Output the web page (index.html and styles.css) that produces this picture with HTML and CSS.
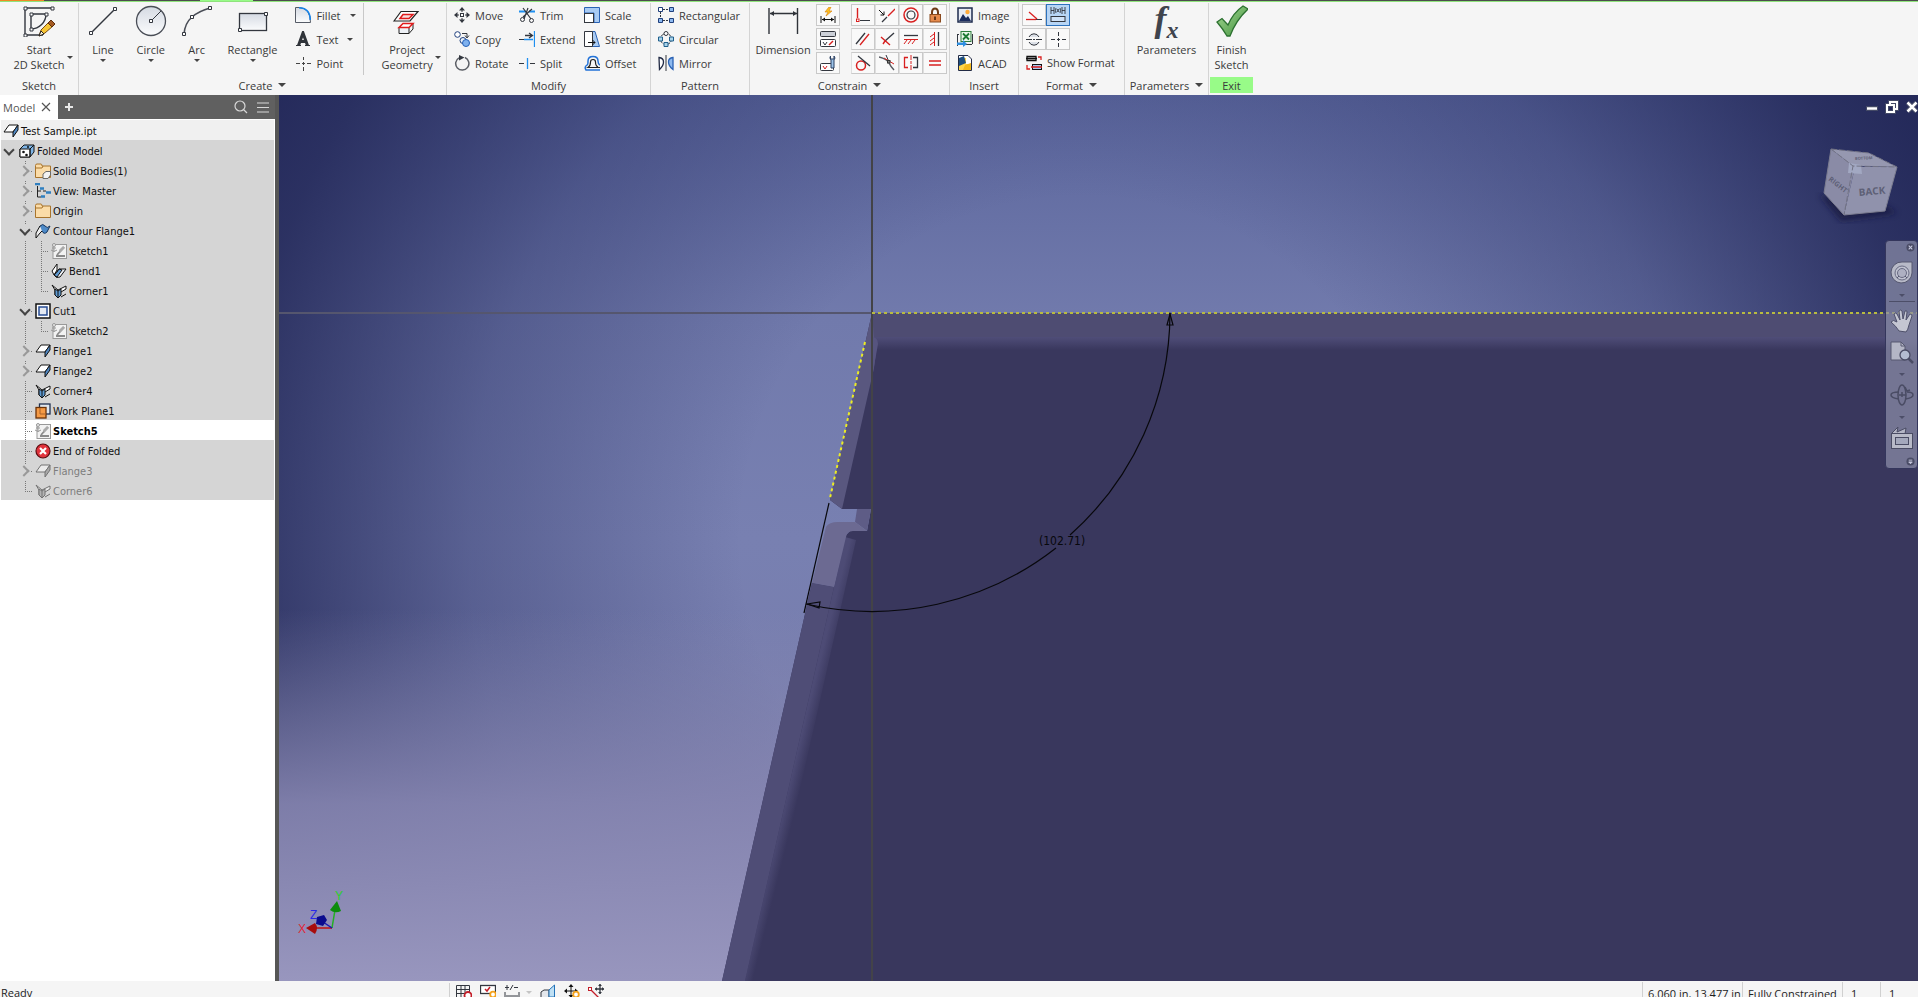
FILE: index.html
```html
<!DOCTYPE html>
<html lang="en">
<head>
    <meta charset="utf-8">
    <title>Test Sample.ipt</title>
    <link rel="stylesheet" href="styles.css">
</head>
<body>
    <!-- shared icons -->
    <svg class="defs" aria-hidden="true">
        <linearGradient id="steel" x1="0" y1="0" x2="0" y2="1"><stop offset="0" stop-color="#d5dae3"/><stop offset="1" stop-color="#fbfcfd"/></linearGradient>
        <linearGradient id="leaf" x1="0" y1="0" x2="1" y2="1"><stop offset="0" stop-color="#a9dc96"/><stop offset="1" stop-color="#3f8f3c"/></linearGradient>
        <symbol id="flange" viewBox="0 0 16 16">
            <path d="M1 9L6 2H15L10 9Z" fill="#fff" stroke="#111"/>
            <path d="M10 9L15 2V7L10 14Z" fill="#4f86c0" stroke="#111"/>
        </symbol>
        <symbol id="corner" viewBox="0 0 16 16">
            <path d="M1 2L7 7V14L4 12V7Z" fill="#fff" stroke="#111"/>
            <path d="M7 7L15 3V6L10 9M10 14L15 11" stroke="#111" fill="#fff"/>
            <path d="M4 6L7 8L10 6V12L7 15L4 12Z" fill="#5f9bd3" stroke="#111"/>
            <path d="M7 8V14" stroke="#111"/>
        </symbol>
        <symbol id="sketch" viewBox="0 0 16 16">
            <rect x="2" y="1.500" width="13.500" height="14" fill="#f2f2f2" stroke="#999"/>
            <path d="M5 13H14M6 12L13 4" stroke="#8a8a8a" stroke-width="1.800" fill="none"/>
            <path d="M8 7L12 3L14 5L9 10Z" fill="#aaa"/>
            <circle cx="3" cy="2" r="1.500" fill="#eee" stroke="#999"/>
            <path d="M3 4V9M1 5H5M0 7Q3 10 6 7" stroke="#999" fill="none"/>
        </symbol>
        <symbol id="folder" viewBox="0 0 16 16">
            <path d="M.5 14.5V2.5Q.5 1 2 1H6Q7 1 7 3H15.500V14.500Z" fill="#fbdca8" stroke="#a8742c"/>
            <path d="M1 5H7L8 3" stroke="#a8742c" fill="none"/>
        </symbol>
    </svg>

    <header class="ribbon">
        <div class="strip"><span class="file-tab"></span><span class="sketch-tab"></span></div>
        <div class="panels">
            <section class="panel sketch-panel">
                <div class="tools">
                    <button class="big has-side">
                        <svg viewBox="0 0 32 32"><g fill="none" stroke="#33373f" stroke-width="1.4"><path d="M29 3H2V30H20M8 24V9H23A15 15 0 0 1 8 24"/><g fill="#fff" stroke-width="1"><path d="M1 2h3v3h-3zM28 2h3v3h-3zM1 29h3v3h-3zM7 8h3v3h-3zM22 8h3v3h-3zM7 23h3v3h-3z"/></g></g><path d="M16 31L18 25L26 17L30 21L22 28Z" fill="#f7c634" stroke="#7a4a12"/><path d="M25 18L28 15L32 19L29 22Z" fill="#a45a22" stroke="#5c2d0c"/><path d="M16 31L18 26L21 29Z" fill="#fff3d8" stroke="#222"/></svg>
                        <span>Start<br>2D Sketch</span><i class="arrow side"></i>
                    </button>
                </div>
                <h2>Sketch</h2>
            </section>

            <section class="panel create-panel">
                <div class="tools">
                    <button class="big"><svg viewBox="0 0 32 32"><path d="M4 28L28 4" stroke="#33373f" stroke-width="1.4"/><path d="M2.500 26.500h3v3h-3zM26.500 2.500h3v3h-3z" fill="#fff" stroke="#33373f"/></svg><span>Line</span><i class="arrow"></i></button>
                    <button class="big"><svg viewBox="0 0 32 32"><circle cx="16" cy="16" r="14.500" fill="url(#steel)" stroke="#4a4e57" stroke-width="1.300"/><path d="M16 16L26 6" stroke="#33373f"/><path d="M14.500 14.500h3v3h-3z" fill="#fff" stroke="#33373f"/></svg><span>Circle</span><i class="arrow"></i></button>
                    <button class="big narrow"><svg viewBox="0 0 32 32"><path d="M3 29Q4 18 11 12T29 3" stroke="#4a4e57" stroke-width="1.600" fill="none"/><path d="M1.500 27.500h3v3h-3zM9.500 10.500h3v3h-3zM27.500 1.500h3v3h-3z" fill="#fff" stroke="#33373f"/></svg><span>Arc</span><i class="arrow"></i></button>
                    <button class="big wide"><svg viewBox="0 0 32 32"><rect x="2.500" y="8.500" width="27" height="17" fill="url(#steel)" stroke="#33373f" stroke-width="1.300"/><path d="M1.500 23.500h3v3h-3zM27.500 7.500h3v3h-3z" fill="#fff" stroke="#33373f"/></svg><span>Rectangle</span><i class="arrow"></i></button>
                    <div class="stack create-stack">
                        <button class="small"><svg viewBox="0 0 16 16"><path d="M.5 .5H4Q15.500 1 15.500 15.500H.5Z" fill="url(#steel)" stroke="#555b66"/><path d="M4 .8Q15 1 15.300 13" stroke="#1682e8" stroke-width="1.600" fill="none"/></svg>Fillet<i class="arrow"></i></button>
                        <button class="small"><svg viewBox="0 0 16 16"><path d="M3.500 14.500L8 2L12.500 14.500M5 10.500H11" stroke="#2f3339" stroke-width="3" fill="none"/><path d="M1 14.500H6M10 14.500H15" stroke="#2f3339"/></svg>Text<i class="arrow"></i></button>
                        <button class="small"><svg viewBox="0 0 16 16"><path d="M1 8.500H5M7 8.500H10M12 8.500H16M8.500 2V5M8.500 7V10M8.500 12V16" stroke="#444"/></svg>Point</button>
                    </div>
                    <button class="big project has-side"><svg viewBox="0 0 32 32"><path d="M3 16L10 6.500H27L19 16Z" fill="#fff" stroke="#222" stroke-width="1.200"/><path d="M9 13.500L12 9.500H22L18 13.500Z" fill="#f7dede" stroke="#e01b1b" stroke-width="1.500"/><path d="M8 22.500H18V28.500H8Z" fill="#eef1f6" stroke="#222"/><path d="M18 28.500L22 24V18.500" fill="none" stroke="#222"/><path d="M8 22.500L12 18.500H22L18 22.500Z" fill="#fff" stroke="#e01b1b" stroke-width="1.500"/></svg><span>Project<br>Geometry</span><i class="arrow side"></i></button>
                </div>
                <h2>Create<i class="arrow"></i></h2>
            </section>

            <section class="panel modify-panel">
                <div class="tools inset">
                    <div class="stack">
                        <button class="small"><svg viewBox="0 0 16 16"><path d="M8 0L11 3.500H5ZM8 16L5 12.500H11ZM0 8L3.500 5V11ZM16 8L12.500 11V5Z" fill="#33373f"/><path d="M8 2V5M8 11V14M2 8H5M11 8H14" stroke="#33373f"/><rect x="6.500" y="6.500" width="3" height="3" fill="#fff" stroke="#33373f"/></svg>Move</button>
                        <button class="small"><svg viewBox="0 0 16 16"><circle cx="3.500" cy="3.500" r="2.800" fill="#fff" stroke="#1f3f7c"/><circle cx="9" cy="9.500" r="3" fill="#e8f1fb" stroke="#1f3f7c"/><circle cx="12" cy="12" r="3.500" fill="#7fb1ee" stroke="#2560b8"/><path d="M8 2.500H13V6M11 4.500L13 7L15 4.500" stroke="#33373f" fill="none"/></svg>Copy</button>
                        <button class="small"><svg viewBox="0 0 16 16"><path d="M11 2.500A6.600 6.600 0 1 1 5 2.800" stroke="#5c5f66" stroke-width="1.500" fill="none"/><path d="M5 0L10.500 2.500L5 5.500Z" fill="#33373f"/></svg>Rotate</button>
                    </div>
                    <div class="stack">
                        <button class="small"><svg viewBox="0 0 16 16"><path d="M0 4.500H7M10 4.500H16" stroke="#1f8ff0" stroke-width="2"/><path d="M4 1L12 12M9 1L5 12M13 2L4 10" stroke="#33373f" stroke-width="1.200"/><circle cx="3.500" cy="12.500" r="2" fill="none" stroke="#33373f"/><circle cx="12.500" cy="13.500" r="2" fill="none" stroke="#33373f"/></svg>Trim</button>
                        <button class="small"><svg viewBox="0 0 16 16"><path d="M0 8.500H5" stroke="#33373f"/><path d="M5 8.500H14M15.500 0V16" stroke="#1f8ff0" stroke-width="1.300"/><path d="M6 4.500H13M10 2L13.500 4.500L10 7" stroke="#33373f" fill="none" stroke-width="1.300"/></svg>Extend</button>
                        <button class="small"><svg viewBox="0 0 16 16"><path d="M0 8.500H5M11 8.500H16" stroke="#33373f"/><path d="M8.500 3V14" stroke="#1f8ff0" stroke-width="1.300"/></svg>Split</button>
                    </div>
                    <div class="stack">
                        <button class="small"><svg viewBox="0 0 16 16"><path d="M.5 .5H15.500V15.500H10V6H.5Z" fill="#a9cbf3" stroke="#2a62b4"/><rect x=".5" y="6.500" width="9" height="9" fill="#fff" stroke="#33373f"/></svg>Scale</button>
                        <button class="small"><svg viewBox="0 0 16 16"><path d="M8 .5H11L15.500 15.500H8Z" fill="#a9cbf3" stroke="#2a62b4"/><path d="M.5 .5H8.500V15.500H.5Z" fill="#fff" stroke="#33373f"/><path d="M4 11.500H11M8.500 9L11 11.500L8.500 14" stroke="#111" fill="none"/></svg>Stretch</button>
                        <button class="small"><svg viewBox="0 0 16 16"><path d="M16 15H2Q0 12 3 10Q4 10 4 6Q4 1.500 9 1.500T14 6Q14 9 16 10" stroke="#2272d8" fill="none" stroke-width="1.500"/><path d="M16 12.500H4Q6.500 11 6.500 7Q6.500 4.500 9 4.500T11.500 7Q11.500 11 14 12" stroke="#222" fill="none" stroke-width="1.200"/></svg>Offset</button>
                    </div>
                </div>
                <h2>Modify</h2>
            </section>

            <section class="panel pattern-panel">
                <div class="tools inset">
                    <div class="stack">
                        <button class="small"><svg viewBox="0 0 16 16"><path d="M5 2.500H11M5 13.500H11M2.500 5V11" stroke="#33373f" stroke-dasharray="2 1"/><path d="M.5 .5h4v4h-4z" fill="#fff" stroke="#1f3f7c"/><path d="M11.500 .5h4v4h-4zM.5 11.500h4v4h-4zM11.500 11.500h4v4h-4z" fill="#8db9ef" stroke="#1f3f7c"/></svg>Rectangular</button>
                        <button class="small"><svg viewBox="0 0 16 16"><circle cx="8" cy="8" r="5.500" fill="none" stroke="#33373f" stroke-dasharray="3 1"/><circle cx="8" cy="2.500" r="2" fill="#fff" stroke="#33373f"/><path d="M.5 6h4v4h-4zM11.500 6h4v4h-4zM6 11.500h4v4h-4z" fill="#a9d3ea" stroke="#1f5f8c"/></svg>Circular</button>
                        <button class="small"><svg viewBox="0 0 16 16"><path d="M1 2.500Q5.500 3 5.500 7T1.500 14.500Z" fill="#fff" stroke="#222b45" stroke-width="1.300"/><path d="M15 2.500Q10.500 3 10.500 7T15 14.500Z" fill="#8db9ef" stroke="#2a62b4" stroke-width="1.300"/><path d="M8 0V16" stroke="#33373f"/></svg>Mirror</button>
                    </div>
                </div>
                <h2>Pattern</h2>
            </section>

            <section class="panel constrain-panel">
                <div class="tools">
                    <button class="big wide"><svg viewBox="0 0 32 32"><path d="M2 3V29M30.500 3V29M3 8.500H30" stroke="#2f3339" stroke-width="1.400"/><path d="M3 8.500L7 6V11ZM30 8.500L26 6V11Z" fill="#2f3339"/></svg><span>Dimension</span></button>
                    <div class="tiles one">
                        <button class="tile" aria-label="Automatic Dimensions"><svg viewBox="0 0 16 16"><path d="M9 0L5 5H8L6 9L12 4H9L11 0Z" fill="#ffc21c" stroke="#d8871a" stroke-width=".7"/><path d="M1 9V16M15 9V16M2 12.500H14" stroke="#111"/><path d="M2 12.500L5 10.500V14.500ZM14 12.500L11 10.500V14.500Z" fill="#111"/></svg></button>
                        <button class="tile" aria-label="Show Constraints"><svg viewBox="0 0 16 16"><rect x=".5" y=".5" width="15" height="5" rx="1" fill="#ccd0d8" stroke="#33373f"/><rect x=".5" y="8.500" width="15" height="7" rx="1" fill="#fff" stroke="#33373f"/><path d="M3 11L5 14L7 11" stroke="#33373f" fill="none"/><path d="M9 14L13 10" stroke="#d82020" stroke-width="1.500"/></svg></button>
                        <button class="tile" aria-label="Constraint Settings"><svg viewBox="0 0 16 16"><rect x=".5" y="8.500" width="13" height="7" rx="1" fill="#fff" stroke="#33373f"/><path d="M3 11L5 14L7 11" stroke="#d82020" fill="none"/><path d="M11 13V5Q9 3 10.500 1V4H14V1Q16 3 14 5V13Z" fill="#9cc4ea" stroke="#2b3f60"/></svg></button>
                    </div>
                    <div class="tiles four">
                        <button class="tile" aria-label="Coincident"><svg viewBox="0 0 16 16"><path d="M2.500 1V11" stroke="#d82020" stroke-width="1.400"/><path d="M5 13.500H15" stroke="#33373f"/><rect x="1.500" y="12" width="2.500" height="2.500" fill="#fff" stroke="#d82020"/></svg></button>
                        <button class="tile" aria-label="Collinear"><svg viewBox="0 0 16 16"><path d="M3 15L8 10" stroke="#33373f" stroke-width="1.300"/><path d="M9 9L16 2" stroke="#d82020" stroke-width="1.300"/><path d="M0 3L5 8M5 4.500V8H1.500" stroke="#111" fill="none"/></svg></button>
                        <button class="tile" aria-label="Concentric"><svg viewBox="0 0 16 16"><circle cx="8" cy="8" r="7" fill="none" stroke="#d82020" stroke-width="1.500"/><circle cx="8" cy="8" r="4" fill="none" stroke="#33373f" stroke-width="1.200"/></svg></button>
                        <button class="tile" aria-label="Fix"><svg viewBox="0 0 16 16"><path d="M5 8V5A3 3.500 0 0 1 11 5V8" fill="none" stroke="#6e3a16" stroke-width="2"/><rect x="3" y="7.500" width="10.500" height="7.500" fill="#e58a4c" stroke="#8a4a1e"/><path d="M8 9.500V13" stroke="#411d08" stroke-width="1.500"/></svg></button>
                        <button class="tile" aria-label="Parallel"><svg viewBox="0 0 16 16"><path d="M1 13L10 2" stroke="#33373f" stroke-width="1.300"/><path d="M5 14L14 3" stroke="#d82020" stroke-width="1.300"/></svg></button>
                        <button class="tile" aria-label="Perpendicular"><svg viewBox="0 0 16 16"><path d="M6 10L15 2" stroke="#33373f" stroke-width="1.300"/><path d="M2 6L11 14M6 10L4 13" stroke="#d82020" stroke-width="1.400"/></svg></button>
                        <button class="tile" aria-label="Horizontal"><svg viewBox="0 0 16 16"><path d="M1 4.500H15" stroke="#33373f" stroke-width="1.300"/><path d="M1 8.500H15M4 9L1 13M8 9L5 13M12 9L9 13" stroke="#d82020"/></svg></button>
                        <button class="tile" aria-label="Vertical"><svg viewBox="0 0 16 16"><path d="M11.500 1V15" stroke="#33373f" stroke-width="1.300"/><path d="M7.500 1V15M7 3L3 6M7 7L3 10M7 11L3 14" stroke="#d82020"/></svg></button>
                        <button class="tile" aria-label="Tangent"><svg viewBox="0 0 16 16"><circle cx="6" cy="10.500" r="4.500" fill="none" stroke="#d82020" stroke-width="1.500"/><path d="M3 1L15 11" stroke="#33373f" stroke-width="1.300"/></svg></button>
                        <button class="tile" aria-label="Smooth"><svg viewBox="0 0 16 16"><path d="M0 2Q8 4 10 8T15 15" stroke="#55585f" stroke-width="1.500" fill="none"/><path d="M7 0L10 7" stroke="#33373f"/><path d="M5 3L15 9" stroke="#d82020"/><rect x="8.500" y="5.500" width="2.500" height="2.500" fill="#888" stroke="#333"/></svg></button>
                        <button class="tile" aria-label="Symmetric"><svg viewBox="0 0 16 16"><path d="M5 2.500H1.500V12.500H5" stroke="#d82020" stroke-width="1.300" fill="none"/><path d="M10 2.500H14.500V12.500H10" stroke="#33373f" stroke-width="1.300" fill="none"/><path d="M8 0V5M8 6V9M8 10V15" stroke="#d82020"/></svg></button>
                        <button class="tile" aria-label="Equal"><svg viewBox="0 0 16 16"><path d="M2 6H14M2 10H14" stroke="#d82020" stroke-width="1.300"/></svg></button>
                    </div>
                </div>
                <h2>Constrain<i class="arrow"></i></h2>
            </section>

            <section class="panel insert-panel">
                <div class="tools inset">
                    <div class="stack">
                        <button class="small"><svg viewBox="0 0 16 16"><rect x="1" y="1" width="14" height="14" fill="#e8ecf5" stroke="#1d2a4c" stroke-width="1.500"/><path d="M2 14L6 7L9 11L11 9L14 14Z" fill="#1b2c5e"/><circle cx="10.500" cy="5" r="2.200" fill="#ffab3d"/></svg>Image</button>
                        <button class="small"><svg viewBox="0 0 16 16"><path d="M.5 3V15M2 3.500H.5M15.500 3V13M1 13.500H15" stroke="#33373f" fill="none"/><rect x="4" y=".5" width="10" height="10" fill="#e9f6e9" stroke="#2e7d3c"/><path d="M6 2.500L12 8.500M12 2.500L6 8.500" stroke="#1d7a34" stroke-width="1.800"/><path d="M0 11.500H6V9L10 13L6 16V14H0Z" fill="#2f8fe0"/></svg>Points</button>
                        <button class="small"><svg viewBox="0 0 16 16"><path d="M1.500 .5H11L14.500 4V15.500H1.500Z" fill="#fff" stroke="#222b45"/><path d="M2 3H9V9H14V15H2Z" fill="#ffd54a"/><path d="M2 3L7 1L9 8L2 11Z" fill="#1e4f80"/><path d="M8 10L14 8V15H6Z" fill="#f4b91c"/></svg>ACAD</button>
                    </div>
                </div>
                <h2>Insert</h2>
            </section>

            <section class="panel format-panel">
                <div class="tools format-tools">
                    <div class="tiles two">
                        <button class="tile" aria-label="Construction"><svg viewBox="0 0 16 16"><path d="M0 12.500H10" stroke="#d82020" stroke-width="1.300"/><path d="M10 12.500H16" stroke="#33373f"/><path d="M3 5L11 12" stroke="#d82020" stroke-width="1.300"/></svg></button>
                        <button class="tile active" aria-label="Driven Dimension"><svg viewBox="0 0 16 16"><path d="M1 0V7M4 0V7M1 3.500H4M12 0V7M15 0V7M12 3.500H15M7 2L9 5M9 2L7 5M6 1Q5 3.500 6 6M10 1Q11 3.500 10 6" stroke="#33373f" stroke-width=".9" fill="none"/><rect x="1" y="9.500" width="14" height="5" fill="#cfe2f8" stroke="#33373f"/></svg></button>
                        <button class="tile" aria-label="Centerline"><svg viewBox="0 0 16 16"><path d="M3 6A5.500 5.500 0 0 1 13 6M3 11A5.500 5.500 0 0 0 13 11" fill="#dde1e8" stroke="#33373f"/><path d="M0 8.500H6M7 8.500H9M10 8.500H16" stroke="#33373f"/></svg></button>
                        <button class="tile" aria-label="Center Point"><svg viewBox="0 0 16 16"><path d="M1 8.500H5M7 8.500H10M12 8.500H16M8.500 1V5M8.500 7V10M8.500 12V16" stroke="#33373f"/></svg></button>
                    </div>
                    <button class="small"><svg viewBox="0 0 16 16"><path d="M1 1.500H10V5.500H1ZM0 3.500H11" fill="none" stroke="#111" stroke-width="1.300"/><rect x="6.500" y="9.500" width="9" height="5" fill="#a9cbf3" stroke="#111"/><path d="M5 12H16M12 2H15V5M1 10V14H4" stroke="#d82020" stroke-width="1.300" fill="none"/></svg>Show Format</button>
                </div>
                <h2>Format<i class="arrow"></i></h2>
            </section>

            <section class="panel params-panel">
                <div class="tools">
                    <button class="big wide"><b class="fx">f<sub>x</sub></b><span>Parameters</span></button>
                </div>
                <h2>Parameters<i class="arrow"></i></h2>
            </section>

            <section class="panel exit-panel">
                <div class="tools">
                    <button class="big"><svg viewBox="0 0 32 32"><path d="M1 17L6 13.500L12 20Q17 8 27 1L32 4Q20 15 14 31H11Q7 24 1 17Z" fill="url(#leaf)" stroke="#2c7130" stroke-width="1.300"/></svg><span>Finish<br>Sketch</span></button>
                </div>
                <h2>Exit</h2>
            </section>
        </div>
    </header>

    <main class="workspace">
        <aside class="browser">
            <div class="tabs">
                <button class="tab">Model<svg viewBox="0 0 10 10"><path d="M1 1L9 9M9 1L1 9" stroke="#555" stroke-width="1.200"/></svg></button>
                <button class="tab-icon" aria-label="Add panel"><svg viewBox="0 0 16 16"><path d="M8 4V12M4 8H12" stroke="#e8e8e8" stroke-width="2"/></svg></button>
                <span class="spacer"></span>
                <button class="tab-icon" aria-label="Search"><svg viewBox="0 0 16 16"><circle cx="7" cy="7" r="5" fill="none" stroke="#d8d8d8" stroke-width="1.200"/><path d="M10.500 10.500L14 14" stroke="#d8d8d8" stroke-width="1.300"/></svg></button>
                <button class="tab-icon" aria-label="Menu"><svg viewBox="0 0 16 16"><path d="M2 4H14M2 8.500H14M2 13H14" stroke="#d8d8d8" stroke-width="1.200"/></svg></button>
            </div>
            <div class="tree">
                <div class="row root"><svg><use href="#flange"/></svg>Test Sample.ipt</div>
                <div class="row"><i class="g top open"></i><svg viewBox="0 0 16 16"><path d="M1 6L5 2H15V9L11 14H1Z" fill="#7eb4e6" stroke="#111"/><path d="M1 6H11V14H1ZM11 6L15 2" fill="#fff" stroke="#111"/><path d="M11 6V14" stroke="#111"/><circle cx="4.500" cy="9" r="1.300" fill="#111"/><circle cx="7.500" cy="12" r="1.300" fill="#111"/><circle cx="9" cy="4" r="1" fill="#111"/></svg>Folded Model</div>
                <div class="row"><i class="g"></i><i class="g tee shut"></i><svg viewBox="0 0 16 16"><use href="#folder"/><path d="M8 15.500V11L11 8.500H15.500V12L13 15.500Z" fill="#f3f3f3" stroke="#6a6a6a"/></svg>Solid Bodies(1)</div>
                <div class="row"><i class="g"></i><i class="g tee shut"></i><svg viewBox="0 0 16 16"><path d="M2.500 3V14H6M2.500 8H6M8 8H11" stroke="#222" fill="none"/><path d="M0 1H5M5 5.500H9M11 9.500H16M6 13.500H10" stroke="#2f7fc0" stroke-width="2.500"/></svg>View: Master</div>
                <div class="row"><i class="g"></i><i class="g tee shut"></i><svg><use href="#folder"/></svg>Origin</div>
                <div class="row"><i class="g"></i><i class="g tee open"></i><svg viewBox="0 0 16 16"><path d="M5 3Q8 0 10 3Q12 6 15 3L12 9Q9 12 7 8L3 10Z" fill="#4d8ac8" stroke="#14335c"/><path d="M5 3L1 10V15L5 10L7 8" fill="#eee" stroke="#111"/></svg>Contour Flange1</div>
                <div class="row"><i class="g"></i><i class="g line"></i><i class="g tee"></i><svg><use href="#sketch"/></svg>Sketch1</div>
                <div class="row"><i class="g"></i><i class="g line"></i><i class="g tee"></i><svg viewBox="0 0 16 16"><path d="M1 8L6 1V7L3 12Z" fill="#fff" stroke="#111"/><path d="M3 12L8 6H15L9 14Q5 16 3 12Z" fill="#eef2f6" stroke="#111"/><path d="M3 12Q6 10 8 6L11 7L6 14Z" fill="#5f9bd3" stroke="#111"/></svg>Bend1</div>
                <div class="row"><i class="g"></i><i class="g line"></i><i class="g elbow"></i><svg><use href="#corner"/></svg>Corner1</div>
                <div class="row"><i class="g"></i><i class="g tee open"></i><svg viewBox="0 0 16 16"><rect x="1" y="1" width="14" height="14" fill="#fff" stroke="#111" stroke-width="1.500"/><rect x="4" y="4" width="8" height="8" fill="#e4e9f1" stroke="#274c94" stroke-width="1.500"/></svg>Cut1</div>
                <div class="row"><i class="g"></i><i class="g line"></i><i class="g elbow"></i><svg><use href="#sketch"/></svg>Sketch2</div>
                <div class="row"><i class="g"></i><i class="g tee shut"></i><svg><use href="#flange"/></svg>Flange1</div>
                <div class="row"><i class="g"></i><i class="g tee shut"></i><svg><use href="#flange"/></svg>Flange2</div>
                <div class="row"><i class="g"></i><i class="g tee"></i><svg><use href="#corner"/></svg>Corner4</div>
                <div class="row"><i class="g"></i><i class="g tee"></i><svg viewBox="0 0 16 16"><rect x="4.500" y="1" width="10.500" height="10" fill="#dfe6ee" stroke="#1f3050" stroke-width="1.300"/><rect x="1" y="4.500" width="10" height="10.500" fill="#f59a45" stroke="#6b3208" stroke-width="1.300"/><path d="M5 5V11H11" fill="none" stroke="#a9622a"/></svg>Work Plane1</div>
                <div class="row current"><i class="g"></i><i class="g tee"></i><svg><use href="#sketch"/></svg>Sketch5</div>
                <div class="row"><i class="g"></i><i class="g tee"></i><svg viewBox="0 0 16 16"><circle cx="8" cy="8" r="7" fill="#e0333c" stroke="#5d0c10" stroke-width="1.200"/><path d="M5 5L11 11M11 5L5 11" stroke="#fff" stroke-width="2.200"/></svg>End of Folded</div>
                <div class="row off"><i class="g"></i><i class="g tee shut"></i><svg><use href="#flange"/></svg>Flange3</div>
                <div class="row off"><i class="g"></i><i class="g elbow"></i><svg><use href="#corner"/></svg>Corner6</div>
            </div>
        </aside>

        <div class="viewport">
            <!-- model view, drawn in window coordinates -->
            <svg class="scene" viewBox="279 95 1639 886" preserveAspectRatio="xMidYMid slice">
                <defs>
                    <linearGradient id="bend" x1="0" y1="0" x2="0" y2="1"><stop offset="0" stop-color="#4f4d78"/><stop offset="1" stop-color="#39375d"/></linearGradient>
                    <linearGradient id="side" gradientUnits="userSpaceOnUse" x1="790" y1="780" x2="802" y2="783"><stop offset="0" stop-color="#4d4b75"/><stop offset="1" stop-color="#39375d"/></linearGradient>
                </defs>
                <path d="M872 313H1918V981H722L812 583L834 587L846 535L850 531H867L871 509H842L830 500Z" fill="#39375d"/>
                <path d="M872 313H1918V337H872Z" fill="#4e4c72"/>
                <path d="M874 337H1918V350H878Z" fill="url(#bend)"/>
                <path d="M834 587L845 537L856 540L757 981H745Z" fill="url(#side)"/>
                <path d="M872 313L874 337L877 344L874 368L842 509L830 500Z" fill="#59577f"/>
                <path d="M873 337Q878 338 878 344L873 372Z" fill="#56547f"/>
                <path d="M857 509H871L867 531L855 522Z" fill="#5e5c86"/>
                <path d="M826 527Q829 522 838 522H855L867 531H853Q847 531 846 537L834 587L812 583Z" fill="#6c6a92"/>
                <path d="M812 583L834 587L745 981H722Z" fill="#4f4d76"/>

                <path d="M279 313H872" stroke="#55566e" stroke-width="2"/>
                <path d="M872 95V630" stroke="#434347" stroke-width="2"/>
                <path d="M872 630V981" stroke="#434349" stroke-width="2"/>
                <path d="M872 313H1918" stroke="#b9bb40" stroke-width="2" stroke-dasharray="3 3"/>
                <path d="M865 342L830 498" stroke="#ecec24" stroke-width="2" stroke-dasharray="3 3"/>
                <g fill="none" stroke="#08080c" stroke-width="1.200">
                    <path d="M829 503L804 613"/>
                    <path d="M1170 313A298 298 0 0 1 1070 535M1056 548A298 298 0 0 1 806 604"/>
                    <path d="M1170 314L1167 325H1173ZM807 604L820 602L819 608Z"/>
                </g>
                <text class="dimension" x="1039" y="545">(102.71)</text>

                <g class="triad">
                    <path d="M332 928H310" stroke="#c01010" stroke-width="1.500"/>
                    <path d="M332 928L335 910" stroke="#22b022" stroke-width="1.500"/>
                    <path d="M332 928L323 922" stroke="#1818b0" stroke-width="1.500"/>
                    <path d="M306 928L315 923Q319 928 315 934Z" fill="#a80c0c"/>
                    <path d="M337 901L341 911Q335 914 330 910Z" fill="#0c8c0c"/>
                    <path d="M317 917L324 915L327 920L323 926L316 924Z" fill="#0b0b8e"/>
                    <text x="298" y="933" fill="#e02838">X</text>
                    <text x="310" y="919" fill="#2828e8">Z</text>
                    <text x="335" y="900" fill="#28d028">Y</text>
                </g>
            </svg>

            <div class="window-buttons">
                <button aria-label="Minimize"><svg viewBox="0 0 14 14"><path d="M1 8.500H13" stroke="#444a66" stroke-width="5"/><path d="M2 8.500H12" stroke="#fff" stroke-width="2.500"/></svg></button>
                <button aria-label="Restore"><svg viewBox="0 0 14 14"><path d="M5 4V2H12V9H10M2 5H9V12H2Z" fill="none" stroke="#444a66" stroke-width="4"/><path d="M5 4V2H12V9H10M2 5H9V12H2Z" fill="none" stroke="#fff" stroke-width="2"/></svg></button>
                <button aria-label="Close"><svg viewBox="0 0 14 14"><path d="M2.500 2.500L11.500 11.500M11.500 2.500L2.500 11.500" stroke="#444a66" stroke-width="5"/><path d="M2.500 2.500L11.500 11.500M11.500 2.500L2.500 11.500" stroke="#fff" stroke-width="2.500"/></svg></button>
            </div>

            <svg class="viewcube" viewBox="0 0 96 88">
                <defs><filter id="soft"><feGaussianBlur stdDeviation="3"/></filter></defs>
                <path d="M5 55L26 81L82 73L60 60Z" fill="#15183a" opacity=".7" filter="url(#soft)"/>
                <path d="M16 9L54 13L82 27L38 26Z" fill="#9698b0"/>
                <path d="M16 9L40 27L29 75L9 53Z" fill="#8a8ba6"/>
                <path d="M40 27L82 27L70 71L29 75Z" fill="#9092ac"/>
                <path d="M34 23L46 25L47 34L33 33Z" fill="#a2a8c2"/>
                <path d="M16 9L54 13L82 27L38 26L29 75M16 9L38 26" fill="none" stroke="#727384" stroke-dasharray="6 2"/>
                <path d="M16 9L9 53L29 75L70 71L82 27" fill="none" stroke="#7c7d90"/>
                <text class="back" transform="translate(44 56) rotate(-5)">BACK</text>
                <text class="right" transform="translate(13 40) rotate(38)">RIGHT</text>
                <text class="top" transform="translate(40 20) rotate(-3)">BOTTOM</text>
            </svg>

            <nav class="navbar">
                <button class="nav-mini" aria-label="Close bar"><svg viewBox="0 0 10 10"><circle cx="5" cy="5" r="4.500" fill="#4a4c66"/><path d="M3 3L7 7M7 3L3 7" stroke="#c8cadf" stroke-width="1.200"/></svg></button>
                <button class="nav-wheel" aria-label="Steering wheel"><svg viewBox="0 0 24 24"><path d="M12 1H22V12A10.500 10.500 0 1 1 12 1Z" fill="#b8bac8" stroke="#565870"/><circle cx="12" cy="12" r="7" fill="#c0c2d0" stroke="#6a6c84"/><circle cx="12" cy="12" r="4.500" fill="#aeb0c2" stroke="#6a6c84"/><path d="M7 17L9 15M17 17L15 15" stroke="#565870"/></svg></button>
                <i class="arrow"></i>
                <hr>
                <button aria-label="Pan"><svg viewBox="0 0 24 24"><path d="M9 22Q6 17 1 13Q3 10 7 13L4 5Q6 3 7 5L10 11L9 2Q11 0 12 2L13 10L15 2Q17 1 17 3L16 11L20 5Q22 5 22 7L19 16Q18 21 16 23Z" fill="#c4c6d2" stroke="#4e506a"/></svg></button>
                <button aria-label="Zoom"><svg viewBox="0 0 24 24"><path d="M1 2H11L15 6V20H1Z" fill="#b4b6c6" stroke="#565870"/><path d="M11 2V6H15" fill="none" stroke="#565870"/><circle cx="15" cy="15" r="5" fill="#b3bcd0" stroke="#4a4c64" stroke-width="1.300"/><path d="M18.500 18.500L23 23" stroke="#4a4c64" stroke-width="2.500"/></svg></button>
                <i class="arrow"></i>
                <button aria-label="Orbit"><svg viewBox="0 0 24 24"><g fill="none" stroke="#4a4c64" stroke-width="1.500"><ellipse cx="12" cy="12" rx="4" ry="10"/><path d="M9 16Q1 15 1 12T9 9M15 16Q23 15 23 12T17 9"/><path d="M15 4L17 8L20 7M9 12H16M12 9V14"/></g></svg></button>
                <i class="arrow"></i>
                <button aria-label="Look At"><svg viewBox="0 0 24 24"><path d="M1 8L8 1L7 6L16 2L15 8" fill="#b4b6c6" stroke="#4a4c64"/><rect x="1.500" y="7.500" width="21" height="15" fill="#b8bac8" stroke="#4a4c64"/><rect x="5.500" y="11.500" width="13" height="7" fill="#a4a8bc" stroke="#4a4c64"/></svg></button>
                <button class="nav-mini last" aria-label="Customize"><svg viewBox="0 0 10 10"><circle cx="5" cy="5" r="4.500" fill="#4a4c66"/><path d="M3 3.500H7M3 5.500H7L5 7.500Z" stroke="#c8cadf" fill="#c8cadf"/></svg></button>
            </nav>
        </div>
    </main>

    <footer class="status">
        <span class="ready">Ready</span>
        <div class="status-tools">
            <button aria-label="Snap to Grid"><svg viewBox="0 0 16 16"><path d="M.5 1.500H13.500V14H.5ZM.5 5.500H13.500M.5 9.500H13.500M5 1V14M9 1V14" fill="none" stroke="#33373f"/><circle cx="12" cy="11.500" r="3.500" fill="#fff" stroke="#c41f2a" stroke-width="1.800"/></svg></button>
            <button aria-label="Show Constraints"><svg viewBox="0 0 16 16"><rect x=".5" y="1.500" width="15" height="8" fill="#fff" stroke="#33373f" stroke-width="1.300"/><path d="M5 5L7 7L10 3" stroke="#c41f2a" fill="none" stroke-width="1.500"/><circle cx="13" cy="10.500" r="2.800" fill="#fff" stroke="#f5a21c" stroke-width="1.800"/></svg></button>
            <button aria-label="Dimension Display"><svg viewBox="0 0 16 16"><path d="M1 3.500H5M3 1V6M6 6L9 1M10 3.500H14M1 8V16M15 8V16M2 12H14" stroke="#33373f" fill="none"/></svg></button>
            <i class="arrow"></i>
            <button aria-label="Slice Graphics"><svg viewBox="0 0 16 16"><path d="M1 8L4 6H9V14H1Z" fill="#e4e7ec" stroke="#33373f"/><path d="M9 6L14.500 1V13H9Z" fill="#bfe0f4" stroke="#2272b8"/></svg></button>
            <button aria-label="Degrees of Freedom"><svg viewBox="0 0 16 16"><path d="M7 0L9.500 3H4.500ZM0 7L3 4.500V9.500ZM14 7L11 4.500V9.500ZM7 14L4.500 11H9.500Z" fill="#111"/><path d="M7 2V12M2 7H12" stroke="#111"/><circle cx="12" cy="10.500" r="2.800" fill="#fff" stroke="#f5a21c" stroke-width="1.800"/></svg></button>
            <button aria-label="Relax Mode"><svg viewBox="0 0 16 16"><path d="M2 5L11 14" stroke="#c41f2a" stroke-width="1.300"/><rect x=".5" y="3.500" width="3" height="3" fill="#fff" stroke="#c41f2a"/><path d="M12 0V10M7 5H16" stroke="#33373f" stroke-width="1.300"/><path d="M12 0L14 2H10ZM12 10L10 8H14ZM7 5L9 3V7ZM16 5L14 3V7Z" fill="#33373f"/></svg></button>
        </div>
        <span class="cell">6.060 in, 13.477 in</span>
        <span class="cell">Fully Constrained</span>
        <span class="cell count">1</span>
        <span class="cell count">1</span>
    </footer>
</body>
</html>
```
FILE: styles.css
```css
* {
    box-sizing: border-box;
}
body {
    margin: 0;
    height: 100vh;
    display: flex;
    flex-direction: column;
    overflow: hidden;
    font-family: "Open Sans", "Noto Sans", sans-serif;
    font-size: 11px;
    color: #3a3a3a;
    background: #f5f5f5;
}
button {
    font: inherit;
    color: inherit;
    background: none;
    border: 0;
    padding: 0;
    cursor: pointer;
}
svg {
    display: block;
    flex: none;
}
.defs {
    position: absolute;
    width: 0;
    height: 0;
}
.spacer {
    flex: 1;
}
.arrow {
    display: inline-block;
    border: 3px solid transparent;
    border-top-color: #444;
    border-bottom: 0;
}

/* ribbon */
.ribbon {
    flex: none;
    height: 95px;
}
.strip {
    display: flex;
    height: 2px;
    background: #4c4c4c;
    border-bottom: 1px solid #8fe37c;
}
.file-tab {
    width: 44px;
    background: #f08a24;
}
.sketch-tab {
    width: 53px;
    margin-left: 156px;
    background: #98fb88;
}
.panels {
    display: flex;
    height: 93px;
    padding-top: 1px;
}
.panel {
    display: flex;
    flex-direction: column;
    flex: none;
    border-right: 1px solid #d4d4d4;
}
.tools {
    display: flex;
    height: 72px;
}
.inset {
    padding-left: 7px;
}
.panel h2 {
    display: flex;
    justify-content: center;
    align-items: center;
    gap: 6px;
    margin: 2px 1px 0;
    height: 16px;
    font-size: 11px;
    font-weight: 400;
}
.panel h2 .arrow {
    border-width: 4px;
    border-bottom: 0;
}
.sketch-panel { width: 79px; }
.create-panel { width: 368px; }
.modify-panel { width: 204px; }
.pattern-panel { width: 99px; }
.constrain-panel { width: 200px; }
.insert-panel { width: 69px; }
.format-panel { width: 106px; }
.params-panel { width: 84px; }
.exit-panel { width: 45px; border-right: 0; }
.exit-panel h2 {
    background: #98fb88;
}

.big {
    display: flex;
    flex-direction: column;
    align-items: center;
    position: relative;
    width: 48px;
    padding-top: 2px;
    line-height: 15px;
    white-space: nowrap;
}
.big svg {
    width: 32px;
    height: 32px;
    margin-bottom: 5px;
}
.big .arrow {
    margin-top: 2px;
}
.big.narrow {
    width: 44px;
}
.big.wide {
    width: 68px;
}
.big.has-side {
    width: 78px;
}
.big .side {
    position: absolute;
    top: 51px;
    right: 5px;
}
.big.project {
    margin-left: 4px;
}
.create-stack {
    width: 78px;
    padding-left: 9px;
    border-right: 1px solid #c8c8c8;
}
.stack {
    display: flex;
    flex-direction: column;
}
.modify-panel .stack {
    width: 65px;
}
.small {
    display: flex;
    align-items: center;
    gap: 5px;
    height: 24px;
    white-space: nowrap;
}
.small svg {
    width: 16px;
    height: 16px;
}
.small .arrow {
    margin-left: 4px;
}
.constrain-panel .wide {
    width: 66px;
}
.exit-panel .big {
    width: 45px;
}
.params-panel .wide {
    width: 83px;
}
.tiles {
    display: grid;
    grid-auto-rows: 22px;
    gap: 2px 0;
    padding-top: 1px;
    align-content: start;
}
.one {
    grid-template-columns: 24px;
}
.two {
    grid-template-columns: 24px 24px;
    padding-left: 3px;
}
.four {
    grid-template-columns: repeat(4, 24px);
    margin-left: 11px;
}
.tile {
    display: flex;
    justify-content: center;
    align-items: center;
    border: 1px solid #c9c9c9;
    background: #f9f9f9;
}
.four .tile + .tile {
    border-left-color: #dedede;
}
.tile svg {
    width: 16px;
    height: 16px;
}
.tile.active {
    background: #b7d5f5;
    border-color: #2d72bd;
}
.format-tools {
    flex-direction: column;
}
.format-tools .small {
    padding-left: 7px;
    height: 26px;
}
.fx {
    height: 37px;
    font: italic bold 36px/28px "Liberation Serif", serif;
    color: #3f444d;
}
.fx sub {
    font-size: 24px;
    line-height: 0;
    vertical-align: -7px;
}

/* model browser */
.workspace {
    flex: 1;
    display: flex;
    min-height: 0;
}
.browser {
    flex: none;
    width: 279px;
    background: #fff;
    border-right: 4px solid #565656;
    font-family: "DejaVu Sans Condensed", "DejaVu Sans", sans-serif;
    color: #101010;
}
.tabs {
    display: flex;
    height: 24px;
    padding-right: 1px;
    background: #606060;
}
.tab {
    display: flex;
    align-items: center;
    gap: 6px;
    width: 58px;
    padding-left: 3px;
    background: #fff;
    color: #555;
    font-family: "Open Sans", sans-serif;
}
.tab svg {
    width: 10px;
    height: 10px;
}
.tab-icon {
    display: flex;
    align-items: center;
    padding: 0 3px;
}
.tab-icon svg {
    width: 16px;
    height: 16px;
}
.tree {
    padding: 1px 1px 0;
}
.row {
    display: flex;
    align-items: center;
    height: 20px;
    padding-top: 2px;
    background: #d5d5d5;
    white-space: nowrap;
}
.row svg {
    width: 16px;
    height: 16px;
    margin: 0 2px;
}
.root {
    background: #f0f0f0;
}
.current {
    background: #fff;
    font-weight: bold;
    color: #000;
}
.off {
    color: #7d7d7d;
}
.off svg {
    filter: grayscale(1);
    opacity: .5;
}

/* tree guides */
.g {
    position: relative;
    flex: none;
    width: 16px;
    height: 20px;
    background-repeat: no-repeat;
}
.g.line,
.g.tee,
.g.elbow {
    background-image:
        repeating-linear-gradient(#777 0 1px, transparent 1px 2px),
        repeating-linear-gradient(90deg, #777 0 1px, transparent 1px 2px);
    background-size: 1px 100%, 8px 1px;
    background-position: 8px 0, 8px 10px;
}
.g.line {
    background-size: 1px 100%, 0 0;
}
.g.elbow {
    background-size: 1px 10px, 8px 1px;
}
.g.open::after,
.g.shut::after {
    content: "";
    position: absolute;
    left: 4px;
    top: 5px;
    width: 6px;
    height: 6px;
    border: solid #444;
    border-width: 0 2px 2px 0;
    transform: rotate(45deg);
}
.g.shut::after {
    left: 3px;
    top: 6px;
    border-color: #999;
    transform: rotate(-45deg);
}
.g.open,
.g.shut {
    background-size: 1px 4px, 2px 1px;
    background-position: 8px 0, 14px 10px;
}

/* model view */
.viewport {
    position: relative;
    flex: 1;
    min-width: 0;
    overflow: hidden;
    background:
        linear-gradient(transparent 58%, rgba(134, 134, 176, .5) 70%, rgba(136, 135, 178, .88) 80%, #9896be 100%),
        radial-gradient(ellipse 52% 96% at 49% 50%, transparent 40%, rgba(38, 45, 96, .38) 72%, rgba(33, 38, 86, .85) 100%, rgba(33, 38, 86, .95) 110%),
        linear-gradient(#5b669d, #717aac 25%, #7880b1 50%, #7579a9);
}
.scene {
    width: 100%;
    height: 100%;
}
.dimension {
    font: 12px "DejaVu Sans Condensed", "DejaVu Sans", sans-serif;
    fill: #08080c;
}
.triad text {
    font: 12px "Liberation Sans", sans-serif;
}
.window-buttons {
    position: absolute;
    top: 5px;
    right: -1px;
    display: flex;
    gap: 6px;
}
.window-buttons svg {
    width: 14px;
    height: 14px;
}
.viewcube {
    position: absolute;
    top: 45px;
    right: 7px;
    width: 96px;
    height: 88px;
}
.viewcube text {
    font: bold 10px "Open Sans", sans-serif;
    fill: #5e6076;
}
.viewcube .right {
    font-size: 7px;
}
.viewcube .top {
    font-size: 4px;
}
.navbar {
    position: absolute;
    top: 145px;
    right: 0;
    display: flex;
    flex-direction: column;
    align-items: center;
    width: 33px;
    height: 229px;
    background: rgba(138, 141, 168, .72);
    border: 1px solid #34365c;
    border-radius: 4px;
}
.navbar svg {
    width: 24px;
    height: 24px;
}
.navbar button {
    margin-top: 7px;
}
.navbar .arrow {
    margin-top: 9px;
    border-top-color: #4c4e68;
}
.navbar hr {
    width: 26px;
    margin: 4px 0 0;
    border: 0;
    border-top: 1px solid #4c4e68;
}
.navbar .nav-wheel {
    margin-top: 9px;
}
.navbar .nav-mini {
    align-self: flex-end;
    margin: 2px 2px 0 0;
}
.navbar .last {
    margin-top: auto;
    margin-bottom: 2px;
}
.navbar .nav-mini svg {
    width: 9px;
    height: 9px;
}

/* status bar, runs past the lower edge of the window */
.status {
    flex: none;
    display: flex;
    height: 16px;
    overflow: hidden;
    line-height: 24px;
    color: #222;
}
.ready {
    flex: none;
    width: 449px;
    padding-left: 1px;
}
.status-tools {
    flex: 1;
    display: flex;
    align-items: flex-start;
    gap: 8px;
    margin-top: 2px;
    padding: 1px 0 0 6px;
    height: 24px;
    border-left: 1px solid #d0d0d0;
}
.status-tools svg {
    width: 16px;
    height: 16px;
}
.status-tools .arrow {
    margin: 7px 0 0 -2px;
    border-top-color: #c4c4c4;
}
.cell {
    width: 100px;
    height: 24px;
    margin-top: 1px;
    padding-left: 5px;
    border-left: 1px solid #d0d0d0;
    line-height: 23px;
    white-space: nowrap;
}
.count {
    width: 38px;
    padding-left: 8px;
}
```
